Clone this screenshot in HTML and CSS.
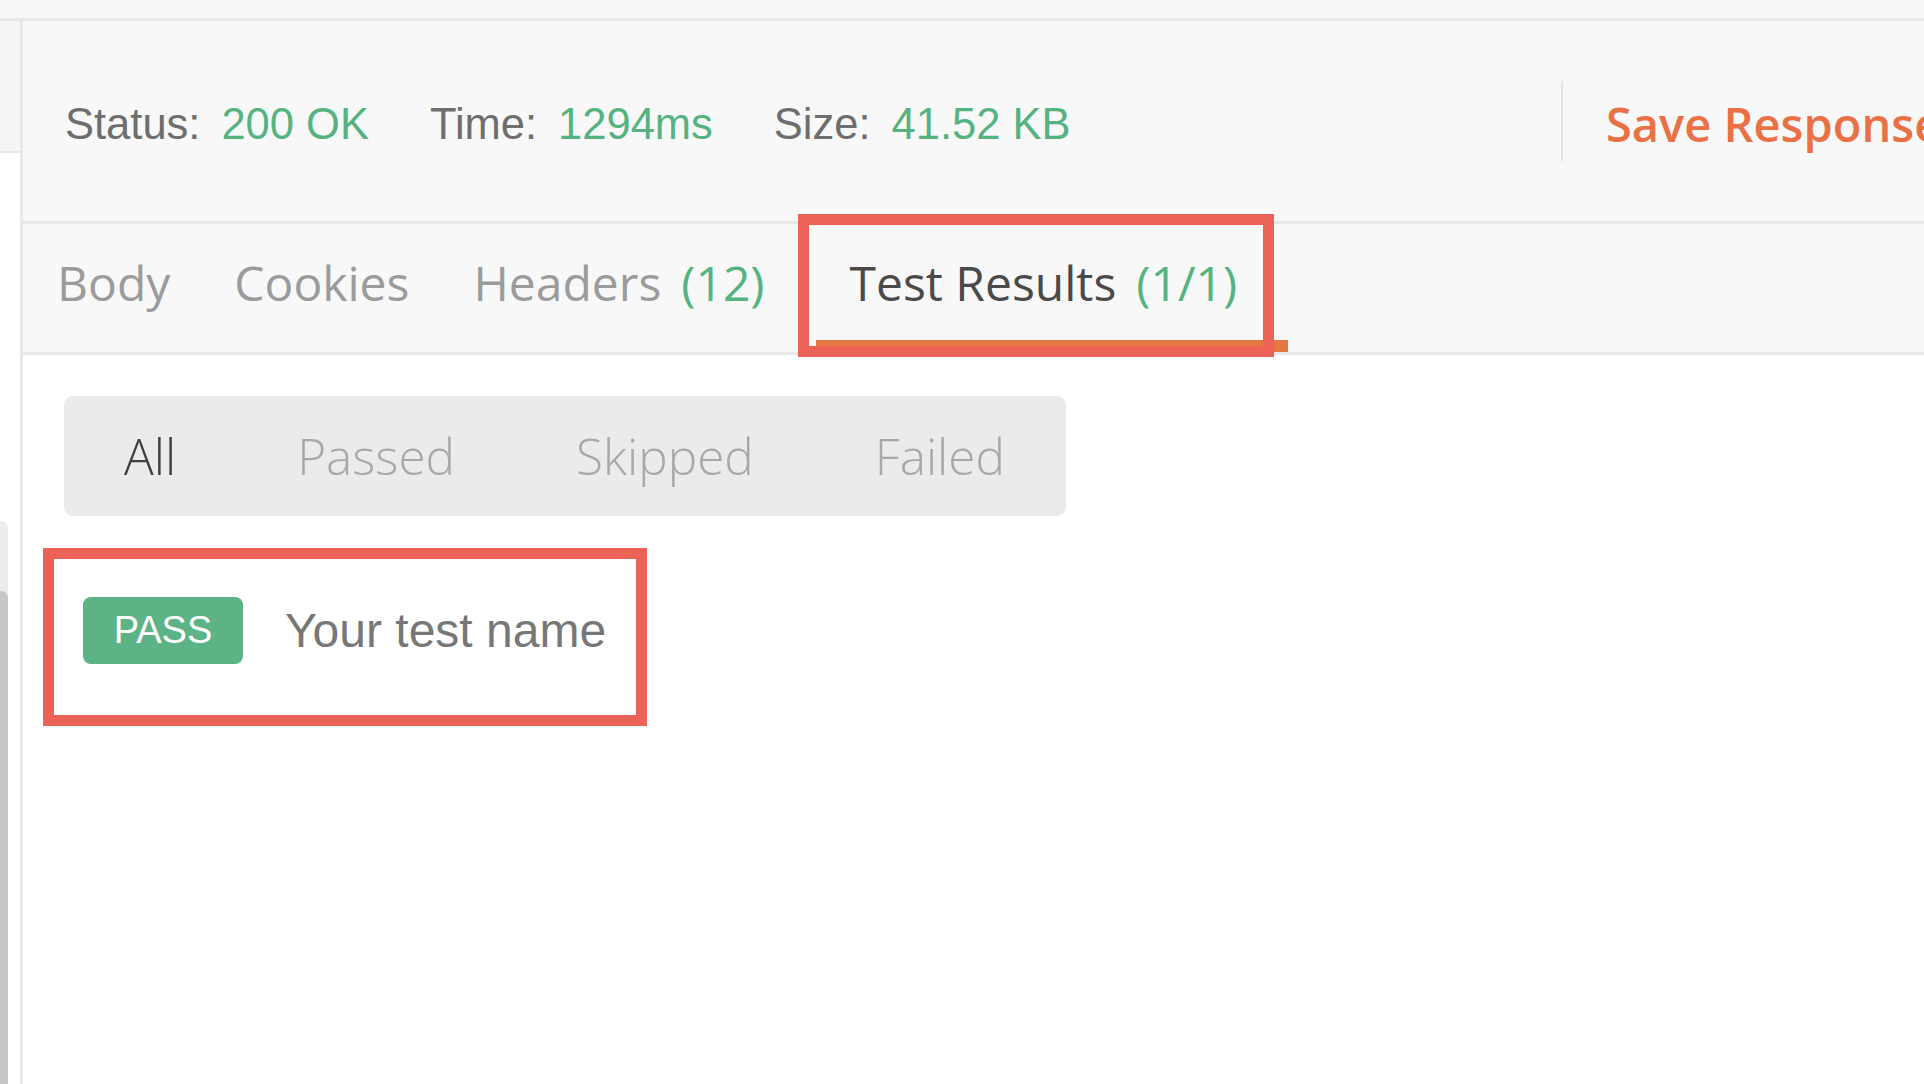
FILE: index.html
```html
<!DOCTYPE html>
<html lang="en">

<head>
  <meta charset="UTF-8">
  <meta name="viewport" content="width=device-width, initial-scale=1.0">
  <title>Test Results</title>
  <link rel="stylesheet" href="styles.css">
</head>

<body>
  <div class="topbar"></div>
  <div class="workspace">
    <aside class="side">
      <div class="side-head"></div>
      <div class="side-track">
        <div class="side-thumb"></div>
      </div>
    </aside>

    <main class="pane">
      <header class="meta">
        <div class="stats">
          <span class="stat"><span class="label">Status:</span><span class="value">200 OK</span></span>
          <span class="stat"><span class="label">Time:</span><span class="value">1294ms</span></span>
          <span class="stat"><span class="label">Size:</span><span class="value">41.52 KB</span></span>
        </div>
        <div class="divider"></div>
        <div class="save">Save Response</div>
      </header>

      <nav class="tabs">
        <a class="tab">Body</a>
        <a class="tab">Cookies</a>
        <a class="tab">Headers<span class="count">(12)</span></a>
        <a class="tab active marked">Test Results<span class="count">(1/1)</span></a>
      </nav>

      <section class="results">
        <div class="filters">
          <span class="filter active">All</span>
          <span class="filter">Passed</span>
          <span class="filter">Skipped</span>
          <span class="filter">Failed</span>
        </div>

        <div class="result">
          <span class="badge">PASS</span>
          <span class="test-name">Your test name</span>
        </div>
      </section>
    </main>
  </div>
</body>

</html>
```

FILE: styles.css
```css
body {
  margin: 0;
  height: 100vh;
  overflow: hidden;
  background-color: white;
  font-family: 'Liberation Sans', Arial, sans-serif;
}

.topbar {
  height: 18px;
  background-color: #f7f7f7;
  border-bottom: 3px solid #e8e8e8;
}

.workspace {
  display: flex;
  height: calc(100vh - 21px);
}

/* left column */

.side {
  width: 20px;
  flex-shrink: 0;
  display: flex;
  flex-direction: column;
  border-right: 3px solid #e8e8e8;
}

.side-head {
  height: 130px;
  background-color: #f5f5f5;
  border-bottom: 2px solid #e8e8e8;
}

.side-track {
  flex: 1;
  width: 8px;
  margin-top: 368px;
  padding-top: 70px;
  background-color: #ececec;
  border-radius: 0 7px 0 0;
  display: flex;
}

.side-thumb {
  flex: 1;
  background-color: #c6c6c6;
  border-radius: 0 7px 0 0;
}

/* response pane */

.pane {
  flex: 1;
  min-width: 0;
  display: flex;
  flex-direction: column;
}

.meta {
  height: 194px;
  display: flex;
  align-items: center;
  padding: 6px 0 0 42px;
  background-color: #f8f8f8;
  border-bottom: 3px solid #e8e8e8;
  overflow: hidden;
}

.stats {
  flex: 1;
  display: flex;
  gap: 61px;
  font-size: 43.5px;
}

.label {
  color: #6e6e6e;
  margin-right: 21px;
}

.value {
  color: #55b381;
}

.divider {
  width: 2px;
  height: 80px;
  margin: -6px 43px 0 0;
  background-color: #e4e4e4;
}

.save {
  width: 318px;
  flex-shrink: 0;
  white-space: nowrap;
  overflow: hidden;
  font-family: 'Open Sans', sans-serif;
  font-size: 47px;
  font-weight: 600;
  color: #ea7046;
}

.tabs {
  height: 128px;
  display: flex;
  padding-left: 2px;
  background-color: #f8f8f8;
  border-bottom: 3px solid #e8e8e8;
  font-family: 'Open Sans', sans-serif;
  font-size: 48px;
}

.tab {
  display: flex;
  align-items: center;
  padding: 0 32px 12px;
  color: #9b9b9b;
  white-space: nowrap;
}

.tab .count {
  margin-left: 20px;
  color: #55b381;
}

.tab.active {
  margin-left: 20px;
  padding: 0 51px 0 33px;
  color: #4a4a4a;
  border-bottom: 12px solid #e5773f;
}

/* red annotation frame */
.marked {
  position: relative;
}

.marked::after {
  content: '';
  position: absolute;
  left: -18px;
  top: -10px;
  right: 14px;
  bottom: -17px;
  border: 11px solid #ec6257;
}

.results {
  padding: 41px 41px;
}

.filters {
  display: inline-flex;
  height: 120px;
  align-items: center;
  background-color: #ebebeb;
  border-radius: 9px;
  font-family: 'Open Sans', sans-serif;
  font-size: 49.5px;
  font-weight: 300;
}

.filter {
  padding: 0 61px 0 60px;
  color: #a8a8a8;
}

.filter.active {
  color: #404040;
}

.result {
  display: flex;
  width: fit-content;
  align-items: center;
  gap: 42px;
  margin: 32px 0 0 -21px;
  padding: 38px 30px 51px 29px;
  border: 11px solid #ec6257;
}

.badge {
  width: 160px;
  height: 67px;
  display: flex;
  align-items: center;
  justify-content: center;
  border-radius: 8px;
  background-color: #5bb386;
  color: white;
  font-size: 38px;
}

.test-name {
  color: #777;
  font-size: 48px;
}
```
